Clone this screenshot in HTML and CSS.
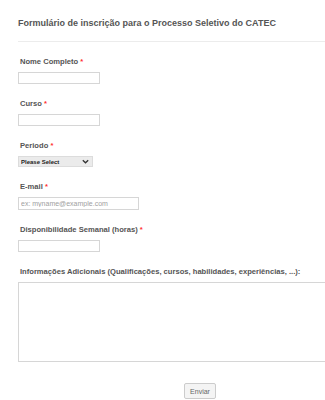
FILE: index.html
```html
<!DOCTYPE html>
<html lang="pt">
<head>
  <meta charset="utf-8">
  <title>Formulário de inscrição</title>
  <link rel="stylesheet" href="styles.css">
</head>
<body>
  <form class="form">
    <h1 class="form__title">Formulário de inscrição para o Processo Seletivo do CATEC</h1>

    <ul class="form__list">
      <li class="field">
        <label class="field__label">Nome Completo <span class="field__req">*</span></label>
        <input class="field__input field__input--short" type="text">
      </li>
      <li class="field">
        <label class="field__label">Curso <span class="field__req">*</span></label>
        <input class="field__input field__input--short" type="text">
      </li>
      <li class="field">
        <label class="field__label">Periodo <span class="field__req">*</span></label>
        <div class="field__select-wrap">
          <select class="field__select">
            <option>Please Select</option>
          </select>
          <svg class="field__select-icon" width="7" height="5" viewBox="0 0 7 5" aria-hidden="true">
            <path d="M0.8 1.2 L3.5 3.8 L6.2 1.2" fill="none" stroke="#333333" stroke-width="1.3"></path>
          </svg>
        </div>
      </li>
      <li class="field">
        <label class="field__label">E-mail <span class="field__req">*</span></label>
        <input class="field__input field__input--email" type="text" placeholder="ex: myname@example.com">
      </li>
      <li class="field">
        <label class="field__label">Disponibilidade Semanal (horas) <span class="field__req">*</span></label>
        <input class="field__input field__input--short" type="text">
      </li>
      <li class="field field--wide">
        <label class="field__label">Informações Adicionais (Qualificações, cursos, habilidades, experiências, ...):</label>
        <textarea class="field__textarea"></textarea>
      </li>
    </ul>

    <div class="form__actions">
      <button class="form__submit" type="button">Enviar</button>
    </div>
  </form>
</body>
</html>
```

FILE: styles.css
```css
*, *::before, *::after {
  margin: 0;
  padding: 0;
  box-sizing: border-box;
}

html {
  background: #ffffff;
}

body {
  font-family: "Liberation Sans", Arial, sans-serif;
  color: #555555;
  overflow: hidden;
}

.form {
  padding-top: 16px;
  padding-left: 18px;
}

.form__title {
  font-size: 9px;
  font-weight: bold;
  line-height: 14px;
  color: #555555;
  padding-bottom: 11px;
  border-bottom: 1px solid #ececec;
}

.form__list {
  list-style: none;
  padding-top: 15px;
}

.field {
  display: flex;
  flex-direction: column;
  align-items: flex-start;
  margin-bottom: 15px;
}

.field__label {
  font-size: 7.6px;
  font-weight: bold;
  line-height: 10px;
  color: #555555;
  margin-bottom: 5px;
  padding-left: 2px;
}

.field__req {
  color: #ff3030;
}

.field__input {
  height: 12px;
  border: 1px solid #d6d6d6;
  font-family: inherit;
  font-size: 7px;
  padding: 0 2px;
  color: #555555;
}

.field__input::placeholder {
  color: #a0a0a0;
}

.field__input--short {
  width: 82px;
}

.field__input--email {
  width: 121px;
  height: 13px;
}

.field__select-wrap {
  position: relative;
  display: flex;
}

.field__select {
  appearance: none;
  width: 75px;
  height: 11px;
  font-family: inherit;
  font-size: 6px;
  font-weight: bold;
  color: #222222;
  background: #ebebeb;
  border: 1px solid #dcdcdc;
  border-radius: 0;
  padding-left: 2px;
}

.field__select-icon {
  position: absolute;
  top: 3px;
  right: 4px;
  pointer-events: none;
}

.field--wide {
  margin-bottom: 0;
}

.field__textarea {
  width: 320px;
  height: 80px;
  border: 1px solid #d6d6d6;
  resize: none;
}

.form__actions {
  display: flex;
  padding-top: 21px;
  padding-left: 166px;
}

.form__submit {
  width: 32px;
  height: 16px;
  font-family: inherit;
  font-size: 7px;
  color: #666666;
  background: #f4f4f4;
  border: 1px solid #cccccc;
  border-radius: 2px;
}
```
